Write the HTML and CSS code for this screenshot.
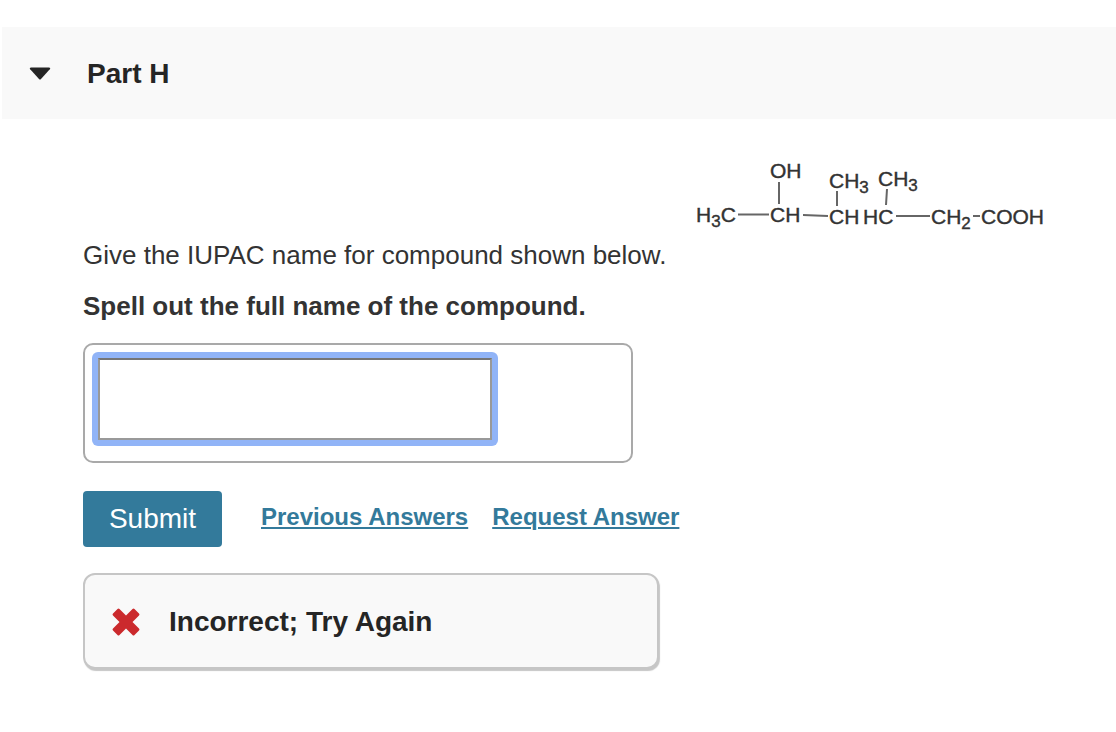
FILE: index.html
```
<!DOCTYPE html>
<html lang="en">
<head>
  <meta charset="UTF-8">
  <meta name="viewport" content="width=device-width, initial-scale=1.0">
  <title>Part H</title>
  <link rel="stylesheet" href="styles.css">
</head>
<body>
  <section class="part">
    <h2 class="part-header">
      <button type="button" class="part-toggle" aria-expanded="true">
        <svg class="caret" viewBox="0 0 22 14" aria-hidden="true">
          <path d="M2 .5h18q2 0 .8 1.800L12 12q-1 1-2 0L1.200 2.300Q0 .5 2 .5z"/>
        </svg>
        <span>Part H</span>
      </button>
    </h2>

    <form class="part-body">
      <div class="question">
        <label for="answer">Give the IUPAC name for compound shown below.</label>
        <svg class="molecule" viewBox="0 0 360 80" role="img" aria-label="Structural formula">
          <g class="bonds">
            <path d="M89 27v22M147 36v15M197 34l-1 16"/>
            <path d="M48 59.500h31M113 60l25 1M206 61h34M283 61h7"/>
          </g>
          <g class="atoms">
            <text x="80" y="23">OH</text>
            <text x="139" y="33">CH<tspan class="sub" dy="5">3</tspan></text>
            <text x="188" y="31">CH<tspan class="sub" dy="5">3</tspan></text>
            <text x="6" y="67">H<tspan class="sub" dy="5">3</tspan><tspan dy="-5">C</tspan></text>
            <text x="80" y="67">CH</text>
            <text x="139" y="69">CH</text>
            <text x="173" y="69">HC</text>
            <text x="241" y="69">CH<tspan class="sub" dy="5">2</tspan></text>
            <text x="291" y="69">COOH</text>
          </g>
        </svg>
      </div>

      <p class="instruction">Spell out the full name of the compound.</p>

      <div class="answer-box">
        <div class="focus-ring">
          <input type="text" id="answer" class="answer-input" autocomplete="off">
        </div>
      </div>

      <div class="actions">
        <button type="button" class="submit">Submit</button>
        <a href="#previous">Previous Answers</a>
        <a href="#request">Request Answer</a>
      </div>

      <div class="feedback" role="status">
        <svg class="cross" viewBox="0 0 28 28" aria-hidden="true">
          <path d="M1 7.500Q0 6.500 1 5.500L5.500 1Q6.500 0 7.500 1L14 7.500 20.500 1Q21.500 0 22.500 1L27 5.500Q28 6.500 27 7.500L20.500 14 27 20.500Q28 21.500 27 22.500L22.500 27Q21.500 28 20.500 27L14 20.500 7.500 27Q6.500 28 5.500 27L1 22.500Q0 21.500 1 20.500L7.500 14z"/>
        </svg>
        <span>Incorrect; Try Again</span>
      </div>
    </form>
  </section>
</body>
</html>
```

FILE: styles.css
```
* {
  box-sizing: border-box;
}
body {
  margin: 0;
  padding: 27px 0 0 2px;
  font-family: "Liberation Sans", Arial, sans-serif;
  font-size: 26px;
  line-height: 32px;
  color: #333;
  background: #fff;
}
.part-header {
  margin: 0;
  background: #f9f9f9;
}
.part-toggle {
  display: flex;
  align-items: center;
  gap: 36px;
  width: 100%;
  padding: 31px 27px 29px;
  border: none;
  background: none;
  font: bold 28px/32px "Liberation Sans", Arial, sans-serif;
  color: #252525;
  text-align: left;
  cursor: pointer;
}
.caret {
  width: 22px;
  height: 14px;
  fill: #252525;
}
.part-body {
  padding: 36px 24px 24px 81px;
}
.question {
  display: flex;
  align-items: flex-end;
  gap: 24px;
}
.molecule {
  width: 360px;
  height: 80px;
  margin-bottom: 36px;
  flex-shrink: 0;
}
.bonds {
  fill: none;
  stroke: #666;
  stroke-width: 2;
}
.atoms {
  font-size: 21px;
  fill: #333;
  stroke: #333;
  stroke-width: 0.4;
}
.sub {
  font-size: 17px;
}
.instruction {
  margin: 19px 0 21px;
  font-weight: bold;
}
.answer-box {
  max-width: 550px;
  padding: 7px 7px 15px;
  border: 2px solid #a9a9a9;
  border-radius: 10px;
}
.focus-ring {
  width: 406px;
  max-width: 100%;
  padding: 6px;
  border-radius: 6px;
  background: #91b4f7;
}
.answer-input {
  display: block;
  width: 100%;
  height: 82px;
  padding: 8px;
  border: 2px solid #999;
  border-top-color: #757575;
  border-radius: 0;
  outline: none;
  background: #fff;
  font: inherit;
  color: inherit;
}
.actions {
  display: flex;
  align-items: center;
  gap: 24px;
  margin-top: 28px;
}
.submit {
  width: 139px;
  height: 56px;
  margin-right: 15px;
  border: none;
  border-radius: 4px;
  background: #337a9b;
  color: #fff;
  font-family: inherit;
  font-size: 28px;
  cursor: pointer;
}
.actions a {
  padding-bottom: 4px;
  color: #337a9b;
  font-size: 24px;
  font-weight: bold;
  text-decoration-thickness: 2px;
  text-underline-offset: 2px;
}
.feedback {
  display: flex;
  align-items: center;
  gap: 29px;
  max-width: 576px;
  margin-top: 26px;
  padding: 31px 27px 29px;
  border: 2px solid #c6c6c6;
  border-radius: 12px;
  background: #f9f9f9;
  box-shadow: 1px 2px 1px #c6c6c6;
  color: #252525;
  font-size: 28px;
  font-weight: bold;
}
.cross {
  width: 28px;
  height: 28px;
  fill: #cb2a2d;
}
```
